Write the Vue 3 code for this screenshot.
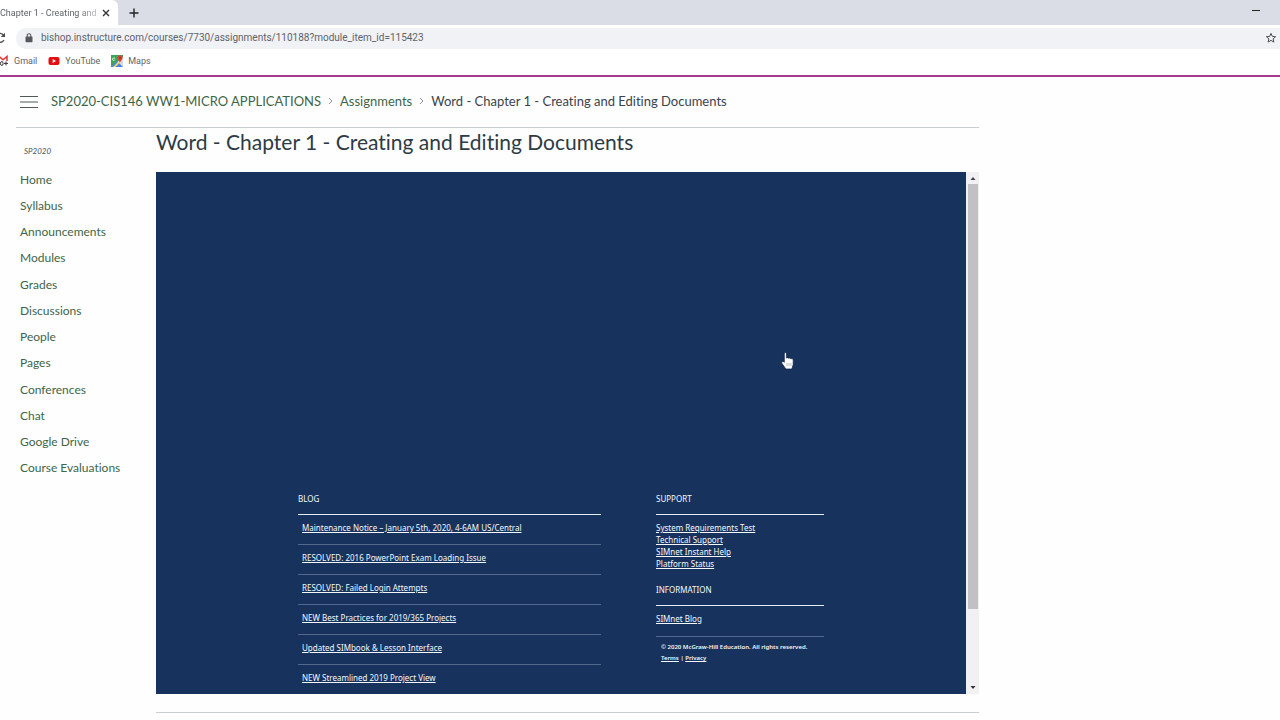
<script setup>
import { ref } from 'vue'

const address = ref('bishop.instructure.com/courses/7730/assignments/110188?module_item_id=115423')

const courseLinks = [
  'Home', 'Syllabus', 'Announcements', 'Modules', 'Grades', 'Discussions',
  'People', 'Pages', 'Conferences', 'Chat', 'Google Drive', 'Course Evaluations',
]

const posts = [
  'Maintenance Notice – January 5th, 2020, 4-6AM US/Central',
  'RESOLVED: 2016 PowerPoint Exam Loading Issue',
  'RESOLVED: Failed Login Attempts',
  'NEW Best Practices for 2019/365 Projects',
  'Updated SIMbook & Lesson Interface',
  'NEW Streamlined 2019 Project View',
]

const support = ['System Requirements Test', 'Technical Support', 'SIMnet Instant Help', 'Platform Status']
</script>

<template>
  <div class="window">
    <header class="browser">
      <div class="tabs">
        <div class="tab">
          <span class="tab-title">Chapter 1 - Creating and</span>
          <button class="icon-btn" aria-label="Close tab">
            <svg width="8" height="8" viewBox="0 0 8 8"><path d="M1 1l6 6M7 1l-6 6" stroke="#333" stroke-width="1.4" /></svg>
          </button>
        </div>
        <button class="icon-btn new-tab" aria-label="New tab">
          <svg width="10" height="10" viewBox="0 0 10 10"><path d="M5 .5v9M.5 5h9" stroke="#222" stroke-width="1.4" /></svg>
        </button>
        <button class="icon-btn minimize" aria-label="Minimize">
          <svg width="8" height="8" viewBox="0 0 8 8"><path d="M0 1.500h8" stroke="#222" /></svg>
        </button>
      </div>

      <div class="toolbar">
        <button class="icon-btn reload" aria-label="Reload">
          <svg width="12" height="12" viewBox="0 0 12 12"><path d="M9.700 3.300A4.500 4.500 0 1 0 10 8" fill="none" stroke="#4a4d51" stroke-width="1.400" /><path d="M11 .8v4.200H6.800z" fill="#4a4d51" /></svg>
        </button>
        <div class="omnibox">
          <svg width="8" height="10" viewBox="0 0 8 10"><rect x=".5" y="3.600" width="7" height="5.600" rx=".8" fill="#55585d" /><path d="M2.200 4V2.500a1.800 1.800 0 0 1 3.600 0V4" fill="none" stroke="#55585d" stroke-width="1.100" /></svg>
          <input v-model="address" class="address" type="text" aria-label="Address" />
          <button class="icon-btn" aria-label="Bookmark this page">
            <svg width="12" height="12" viewBox="0 0 12 12"><path d="M6 1.400l1.300 3 3.300.3-2.500 2.100.8 3.300L6 8.400l-2.900 1.700.8-3.300-2.500-2.100 3.300-.3z" fill="none" stroke="#4a4d51" stroke-width="1" /></svg>
          </button>
        </div>
      </div>

      <nav class="bookmarks" aria-label="Bookmarks">
        <a href="#" class="bookmark gmail">
          <svg width="12" height="12" viewBox="0 0 12 12"><path d="M2 6V1.500l4 3.300 4-3.300V6" fill="#fff" stroke="#d93a35" stroke-width="1.500" /><path d="M3.500 8.500a1.300 2 0 1 0 2.600 0a1.300 2 0 1 0-2.600 0M7 8.400h4M9 6.400v4" fill="none" stroke="#333" stroke-width="1" /></svg>
          Gmail
        </a>
        <a href="#" class="bookmark">
          <svg width="12" height="12" viewBox="0 0 12 12"><rect x=".5" y="2" width="11" height="8" rx="2" fill="#e60f0f" /><path d="M4.700 4.100v3.800L8 6z" fill="#fff" /></svg>
          YouTube
        </a>
        <a href="#" class="bookmark">
          <svg width="12" height="12" viewBox="0 0 12 12"><rect width="12" height="12" rx="1" fill="#dfe3e8" /><path d="M0 0h12v2L2 12H0z" fill="#3fa45b" /><path d="M0 12L6 6l6 6z" fill="#4a83e6" /><path d="M2 12L12 2v2.500L4.500 12z" fill="#f8d25a" /><path d="M5.500 8L12 2v8.500L8 7z" fill="#d4d9df" /><path d="M9 7.500C8 5.500 6.400 4.700 6.400 2.800a2.600 2.600 0 0 1 5.200 0C11.600 4.700 10 5.500 9 7.500z" fill="#db4539" /><circle cx="9" cy="2.800" r=".9" fill="#812b25" /><path d="M4 3H2.900a1.200 1.200 0 1 0 .9 1.600" fill="none" stroke="#fff" stroke-width=".8" /></svg>
          Maps
        </a>
      </nav>
    </header>

    <div class="page">
      <div class="crumb-bar">
        <button class="icon-btn" aria-label="Course navigation">
          <svg width="18" height="12" viewBox="0 0 18 12"><path d="M0 .5h18M0 6h18M0 11.500h18" stroke="#4f5a55" stroke-width="1.200" /></svg>
        </button>
        <nav class="crumbs" aria-label="Breadcrumb">
          <a href="#">SP2020-CIS146 WW1-MICRO APPLICATIONS</a>
          <svg width="5" height="8" viewBox="0 0 5 8"><path d="M1 1l3 3-3 3" fill="none" stroke="#8d9396" /></svg>
          <a href="#">Assignments</a>
          <svg width="5" height="8" viewBox="0 0 5 8"><path d="M1 1l3 3-3 3" fill="none" stroke="#8d9396" /></svg>
          <span>Word - Chapter 1 - Creating and Editing Documents</span>
        </nav>
      </div>

      <div class="columns">
        <aside class="sidebar">
          <p class="term">SP2020</p>
          <nav class="course-nav" aria-label="Course">
            <a v-for="link in courseLinks" :key="link" href="#">{{ link }}</a>
          </nav>
        </aside>

        <main class="content">
          <h1>Word - Chapter 1 - Creating and Editing Documents</h1>
          <div class="tool">
            <div class="frame">
              <div class="frame-columns">
                <section>
                  <h2>BLOG</h2>
                  <ul class="posts">
                    <li v-for="post in posts" :key="post"><a href="#">{{ post }}</a></li>
                  </ul>
                </section>
                <section>
                  <h2>SUPPORT</h2>
                  <ul class="support">
                    <li v-for="item in support" :key="item"><a href="#">{{ item }}</a></li>
                  </ul>
                  <h2>INFORMATION</h2>
                  <p class="info"><a href="#">SIMnet Blog</a></p>
                  <p class="legal">
                    © 2020 McGraw-Hill Education. All rights reserved.<br />
                    <a href="#">Terms</a> | <a href="#">Privacy</a>
                  </p>
                </section>
              </div>
              <svg class="pointer" width="14" height="18" viewBox="0 0 14 18"><path d="M3.300 1.200Q4.400 0 5.400 1.200V6Q6.500 5.200 7.500 6.200Q8.800 5.500 9.800 6.700Q11.500 6.300 12.200 7.800V12.500L10.800 17H4.900L1 11.500Q0 9.500 2 9.200L3.300 10.300z" fill="#fff" stroke="#0c203f" stroke-width=".7" /><path d="M6 11v3M8 11v3M10 11v3" stroke="#8795aa" stroke-width=".6" /></svg>
            </div>
            <div class="scrollbar">
              <svg width="6" height="12" viewBox="0 0 6 12"><path d="M.5 8L3 5l2.500 3z" fill="#444" /></svg>
              <div class="track"><div class="thumb"></div></div>
              <svg width="6" height="12" viewBox="0 0 6 12"><path d="M.5 4L3 7l2.500-3z" fill="#333" /></svg>
            </div>
          </div>
          <hr />
        </main>
      </div>
    </div>
  </div>
</template>

<style>
body {
  background: #fefefe;
  overflow: hidden;
}
</style>

<style scoped>
* {
  box-sizing: border-box;
}
h1,
h2,
p,
ul {
  margin: 0;
  padding: 0;
  font-weight: 400;
  list-style: none;
}
svg {
  display: block;
  flex: none;
}
.window {
  height: 100vh;
  overflow: hidden;
  font-family: Lato, 'Liberation Sans', sans-serif;
  font-variant-ligatures: none;
}
.icon-btn {
  display: flex;
  flex: none;
  padding: 0;
  border: 0;
  background: none;
}
.browser {
  border-bottom: 2px solid #a93a8b;
  background: #fff;
  color: #5f6368;
  font: 9px/12px Roboto, 'Open Sans', sans-serif;
}
.tabs {
  display: flex;
  align-items: center;
  height: 25px;
  padding-right: 20px;
  background: #dadde5;
}
.tab {
  display: flex;
  align-items: center;
  justify-content: space-between;
  width: 118px;
  height: 25px;
  padding-right: 8px;
  border-radius: 0 6px 0 0;
  background: #fff;
}
.tab-title {
  white-space: nowrap;
  mask-image: linear-gradient(to right, #000 80%, #0006);
}
.new-tab {
  margin-left: 11px;
}
.minimize {
  margin-left: auto;
}
.toolbar {
  display: flex;
  align-items: center;
  height: 26px;
}
.reload {
  margin-left: -6px;
}
.omnibox {
  display: flex;
  flex: 1;
  align-items: center;
  gap: 8px;
  height: 21px;
  margin-left: 10px;
  padding: 0 3px 0 9px;
  border-radius: 10px 0 0 10px;
  background: #f0f2f6;
}
.address {
  flex: 1;
  min-width: 0;
  padding: 0;
  border: 0;
  outline: 0;
  background: none;
  color: #5f6368;
  font: 10px/14px Roboto, 'Open Sans', sans-serif;
}
.bookmarks {
  display: flex;
  align-items: center;
  gap: 11px;
  height: 24px;
  padding-bottom: 4px;
}
.bookmark {
  display: flex;
  align-items: center;
  gap: 5px;
  color: #5f6368;
  text-decoration: none;
}
.gmail {
  margin-left: -3px;
}
.page {
  max-width: 979px;
  padding-left: 16px;
}
.crumb-bar {
  display: flex;
  align-items: center;
  gap: 13px;
  height: 51px;
  padding-left: 4px;
  border-bottom: 1px solid #c7cdd1;
}
.crumbs {
  display: flex;
  align-items: center;
  gap: 7px;
  padding-bottom: 2px;
  color: #3a444c;
  font-size: 13px;
  line-height: 18px;
  white-space: nowrap;
}
.crumbs a,
.course-nav a {
  color: #3f6549;
  text-decoration: none;
}
.columns {
  display: flex;
}
.sidebar {
  flex: none;
  width: 140px;
  padding-top: 17px;
}
.term {
  padding-left: 8px;
  color: #4c565d;
  font-size: 8px;
  font-style: italic;
  line-height: 12px;
}
.course-nav {
  display: flex;
  flex-direction: column;
  height: 315px;
  margin-top: 9px;
  padding-left: 4px;
  font-size: 12px;
}
.course-nav a {
  display: flex;
  flex: 1;
  align-items: center;
}
.content {
  flex: 1;
  min-width: 0;
}
h1 {
  margin-bottom: 17px;
  color: #2d3b45;
  font-size: 21px;
  line-height: 27px;
  white-space: nowrap;
}
.tool {
  display: flex;
  height: 522px;
}
.frame {
  position: relative;
  flex: 1;
  overflow: hidden;
  background: #17335d;
  color: #f4f8fc;
  font: 8px/12px 'Noto Sans', 'Open Sans', sans-serif;
}
.frame a {
  color: inherit;
  text-decoration: underline;
}
.frame-columns {
  display: grid;
  grid-template-columns: 303fr 168fr;
  gap: 55px;
  max-width: 526px;
  margin: 0 auto;
  padding-top: 321px;
}
h2 {
  padding-bottom: 9px;
  border-bottom: 1px solid #e6eef5;
  font-size: 8px;
  line-height: 12px;
}
.posts li {
  padding: 7px 4px 10px;
  border-bottom: 1px solid #52698b;
}
.posts li a,
.support li a {
  display: block;
}
.support {
  padding: 7px 0 14px;
}
.info {
  padding: 7px 0 11px;
  border-bottom: 1px solid #52698b;
}
.legal {
  padding: 5px;
  font-size: 6px;
  font-weight: 600;
  line-height: 11px;
  white-space: nowrap;
}
.pointer {
  position: absolute;
  top: 180px;
  left: 625px;
}
.scrollbar {
  display: flex;
  flex: none;
  flex-direction: column;
  align-items: center;
  width: 13px;
  padding-left: 1px;
  background: #f1f1f3;
}
.track {
  flex: 1;
  align-self: stretch;
  padding: 0 1px;
}
.thumb {
  height: 425px;
  background: #c1c1c3;
}
hr {
  height: 1px;
  margin: 18px 0 0;
  border: 0;
  background: #c7cdd1;
}
</style>
